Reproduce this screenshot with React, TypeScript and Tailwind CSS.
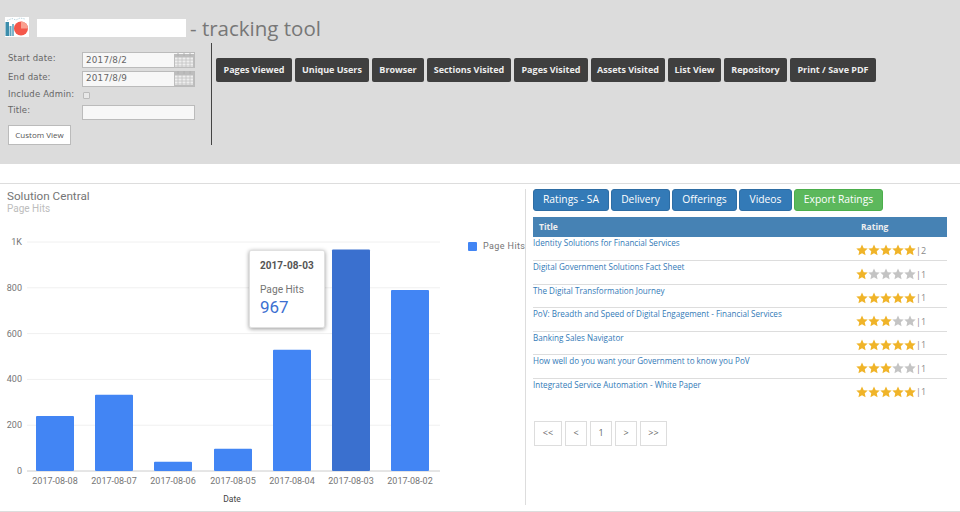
import React from 'react';

const reportButtons = [
  { label: 'Pages Viewed', width: 'w-[76px]' },
  { label: 'Unique Users', width: 'w-[74px]' },
  { label: 'Browser', width: 'w-[52px]' },
  { label: 'Sections Visited', width: 'w-[84px]' },
  { label: 'Pages Visited', width: 'w-[74px]' },
  { label: 'Assets Visited', width: 'w-[74px]' },
  { label: 'List View', width: 'w-[53px]' },
  { label: 'Repository', width: 'w-[63px]' },
  { label: 'Print / Save PDF', width: 'w-[86px]' },
];

const ratingTabs = [
  { label: 'Ratings - SA', width: 'w-[76px]', color: 'bg-[#337ab7] border-[#2e6da4]' },
  { label: 'Delivery', width: 'w-[59px]', color: 'bg-[#337ab7] border-[#2e6da4]' },
  { label: 'Offerings', width: 'w-[65px]', color: 'bg-[#337ab7] border-[#2e6da4]' },
  { label: 'Videos', width: 'w-[53px]', color: 'bg-[#337ab7] border-[#2e6da4]' },
  { label: 'Export Ratings', width: 'w-[89px]', color: 'bg-[#5cb85c] border-[#4cae4c]' },
];

const ratings = [
  { title: 'Identity Solutions for Financial Services', stars: 5, count: 2 },
  { title: 'Digital Government Solutions Fact Sheet', stars: 1, count: 1 },
  { title: 'The Digital Transformation Journey', stars: 5, count: 1 },
  { title: 'PoV: Breadth and Speed of Digital Engagement - Financial Services', stars: 3, count: 1 },
  { title: 'Banking Sales Navigator', stars: 5, count: 1 },
  { title: 'How well do you want your Government to know you PoV', stars: 3, count: 1 },
  { title: 'Integrated Service Automation - White Paper', stars: 5, count: 1 },
];

const pages = [
  { label: '<<', width: 'w-[28px]' },
  { label: '<', width: 'w-[22px]' },
  { label: '1', width: 'w-[22px]' },
  { label: '>', width: 'w-[22px]' },
  { label: '>>', width: 'w-[27px]' },
];

const bars = [
  { date: '2017-08-08', value: 240, x: 36 },
  { date: '2017-08-07', value: 333, x: 95 },
  { date: '2017-08-06', value: 40, x: 154 },
  { date: '2017-08-05', value: 97, x: 214 },
  { date: '2017-08-04', value: 530, x: 273 },
  { date: '2017-08-03', value: 967, x: 332 },
  { date: '2017-08-02', value: 790, x: 391 },
];

const ticks = ['1K', '800', '600', '400', '200', '0'];

const Logo = () => (
  <svg width="24" height="20" viewBox="0 0 24 20" className="bg-white">
    <rect x="0.5" y="5" width="3.5" height="14" fill="#3c8dab" />
    <rect x="4.5" y="9" width="2" height="10" fill="#5fa5bf" />
    <rect x="7" y="7" width="2" height="12" fill="#7fb7cc" />
    <circle cx="16" cy="11.5" r="7" fill="#f4574a" />
    <path d="M16 11.5V4.5A7 7 0 0 1 23 11.5Z" fill="#f9a08f" />
    <path d="M2 3.5l5-2 4 1.5 4-2 5 1" fill="none" stroke="#a9cbd8" strokeWidth="0.8" strokeDasharray="1.5 1" />
  </svg>
);

const CalendarIcon = () => (
  <svg width="20" height="15" viewBox="0 0 20 15" className="shrink-0">
    <rect x="0.5" y="1.5" width="19" height="13" fill="#eeeeee" stroke="#bdbdbd" />
    <rect x="1" y="2" width="18" height="2.5" fill="#bdbdbd" />
    <path d="M4 0v3M10 0v3M16 0v3" stroke="#b0b0b0" strokeWidth="1" fill="none" />
    <path d="M1 7h18M1 10h18M1 13h18M4 4v10M8 4v10M12 4v10M16 4v10" stroke="#c2c2c2" strokeWidth="0.8" fill="none" />
  </svg>
);

const Star = ({ filled }: { filled: boolean }) => (
  <svg width="12" height="12" viewBox="0 0 24 24">
    <polygon
      points="12,1 15.4,8.3 23.4,9.2 17.5,14.6 19.1,22.5 12,18.5 4.9,22.5 6.5,14.6 0.6,9.2 8.6,8.3"
      fill={filled ? '#f0b429' : '#c4c4c4'}
    />
  </svg>
);

const DateField = ({ value }: { value: string }) => (
  <div className="flex h-[16px] w-[113px] items-center justify-between border border-[#bbbbbb] bg-[#f7f7f7] pl-[3px] text-[8.8px] leading-none text-[#666666]">
    <span>{value}</span>
    <CalendarIcon />
  </div>
);

const FilterForm = () => (
  <div className="mt-[8px] h-[94px] w-[211px] pl-[8px] font-['DejaVu_Sans',sans-serif] text-[8.5px] tracking-[0.2px] text-[#666666]">
    <div className="flex h-[18px] items-center justify-between pr-[16px]">
      <span className="-mt-[3px]">Start date:</span>
      <DateField value="2017/8/2" />
    </div>
    <div className="mt-[1px] flex h-[17px] items-center justify-between pr-[16px]">
      <span className="-mt-[3px]">End date:</span>
      <DateField value="2017/8/9" />
    </div>
    <div className="flex h-[17px] items-center pr-[16px]">
      <span className="-mt-[2px] w-[75px]">Include Admin:</span>
      <span className="h-[7px] w-[7px] rounded-[1px] border border-[#bbbbbb] bg-[#e8e8e8]" />
    </div>
    <div className="flex h-[16px] items-center justify-between pr-[16px]">
      <span className="-mt-[4px]">Title:</span>
      <div className="h-[15px] w-[113px] border border-[#bbbbbb] bg-[#f7f7f7]" />
    </div>
    <button className="mt-[5px] block h-[20px] w-[63px] border border-[#bbbbbb] bg-white font-['Open_Sans',sans-serif] text-[8px] tracking-normal text-[#555555]">
      Custom View
    </button>
  </div>
);

const Header = () => (
  <header className="h-[164px] shrink-0 bg-[#dcdcdc]">
    <div className="flex h-[43px] items-end pb-[6px] pl-[5px]">
      <Logo />
      <div className="ml-[8px] h-[18px] w-[149px] bg-white" />
      <span className="-mb-[2px] ml-[4px] font-['Open_Sans',sans-serif] text-[20.5px] leading-[22px] text-[#777777]">- tracking tool</span>
    </div>
    <div className="flex">
      <FilterForm />
      <div className="h-[102px] w-[1px] bg-[#444444]" />
      <div className="ml-[4px] mt-[15px] flex h-[24px] gap-[3px]">
        {reportButtons.map((b) => (
          <button
            key={b.label}
            className={`${b.width} rounded-[2px] bg-[#3f3f3f] font-['Open_Sans',sans-serif] text-[9px] font-bold text-[#eeeeee]`}
          >
            {b.label}
          </button>
        ))}
      </div>
    </div>
  </header>
);

const PageHitsChart = () => (
  <section className="relative mt-[5px] h-[316px] w-[526px] shrink-0 border-r border-[#dddddd] font-['Roboto',sans-serif]">
    <h2 className="pl-[7px] pt-[1px] text-[11.7px] leading-[12px] text-[#757575]">Solution Central</h2>
    <p className="pl-[7px] text-[10px] leading-[14px] text-[#bdbdbd]">Page Hits</p>
    <svg width="525" height="316" viewBox="0 189 525 316" className="absolute left-0 top-0">
      {ticks.map((t, i) => {
        const y = 242 + i * 45.8;
        return (
          <g key={t}>
            <line x1="27" x2="440" y1={y} y2={y} stroke={t === '0' ? '#cccccc' : '#f0f0f0'} strokeWidth="1" />
            <text x="22" y={y + 3} textAnchor="end" fontSize="9" fill="#757575">{t}</text>
          </g>
        );
      })}
      {bars.map((b) => {
        const h = b.value * 0.229;
        const hovered = b.value === 967;
        return (
          <g key={b.date}>
            <rect x={b.x} y={471 - h} width="38" height={h} rx="1" fill={hovered ? '#3a70cf' : '#4285f4'} />
            <text x={b.x + 19} y="484" textAnchor="middle" fontSize="9" fill="#757575">{b.date}</text>
          </g>
        );
      })}
      <text x="232" y="502" textAnchor="middle" fontSize="8.5" fill="#444444">Date</text>
      <rect x="468" y="242" width="9" height="9" rx="1" fill="#4285f4" />
      <text x="483" y="249" fontSize="9" letterSpacing="0.4" fill="#757575">Page Hits</text>
    </svg>
    <div className="absolute left-[249px] top-[61px] h-[78px] w-[76px] rounded-[2px] border border-[#e0e0e0] bg-white pl-[10px] pt-[9px] shadow-[0_1px_4px_rgba(0,0,0,0.4)]">
      <div className="text-[10px] font-bold leading-[12px] text-[#555555]">2017-08-03</div>
      <div className="mt-[12px] text-[10.2px] leading-[12px] text-[#757575]">Page Hits</div>
      <div className="text-[17px] leading-[22px] text-[#3c6fd1]">967</div>
    </div>
  </section>
);

const RatingsTable = () => (
  <section className="pl-[7px] pt-[5px] font-['Open_Sans',sans-serif]">
    <div className="flex h-[22px] gap-[2px]">
      {ratingTabs.map((t) => (
        <button key={t.label} className={`${t.width} ${t.color} rounded-[3px] border text-[10.3px] font-medium text-white`}>
          {t.label}
        </button>
      ))}
    </div>
    <table className="mt-[6px] w-[414px] table-fixed border-collapse text-left">
      <thead>
        <tr className="h-[20px] bg-[#4682b4] text-[8.5px] font-bold text-[#eeeeee]">
          <th className="w-[323px] pl-[6px] font-bold">Title</th>
          <th className="pl-[5px] font-bold">Rating</th>
        </tr>
      </thead>
      <tbody>
        {ratings.map((r, i) => (
          <tr key={r.title} className={`h-[23.5px] ${i < ratings.length - 1 ? 'border-b border-[#dddddd]' : ''}`}>
            <td className="align-top text-[8.1px] leading-[12px] text-[#337ab7]">{r.title}</td>
            <td className="align-top">
              <div className="mt-[7px] flex items-center">
                {[1, 2, 3, 4, 5].map((n) => (
                  <Star key={n} filled={n <= r.stars} />
                ))}
                <span className="text-[9px] leading-none text-[#8a8a8a]">|{r.count}</span>
              </div>
            </td>
          </tr>
        ))}
      </tbody>
    </table>
    <nav className="ml-[1px] mt-[19px] flex gap-[3px]">
      {pages.map((p) => (
        <button key={p.label} className={`${p.width} h-[25px] border border-[#dddddd] bg-white text-[9px] text-[#666666]`}>
          {p.label}
        </button>
      ))}
    </nav>
  </section>
);

export default function App() {
  return (
    <div className="flex h-[512px] w-[960px] flex-col overflow-hidden bg-white">
      <Header />
      <main className="mt-[19px] flex h-[329px] items-start border-y border-[#dddddd]">
        <PageHitsChart />
        <RatingsTable />
      </main>
    </div>
  );
}
